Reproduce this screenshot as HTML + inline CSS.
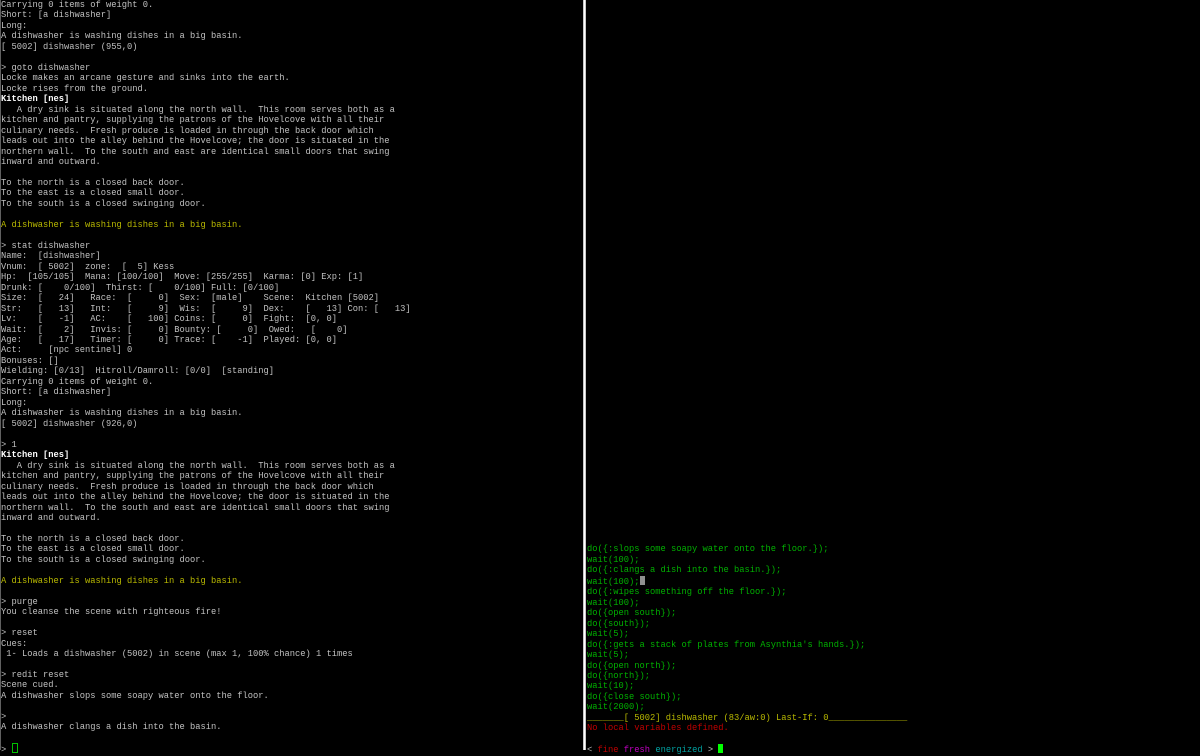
<!DOCTYPE html>
<html><head><meta charset="utf-8"><style>
html,body{margin:0;padding:0;background:#000;width:1200px;height:750px;overflow:hidden}
pre{margin:0;font-family:"Liberation Mono","DejaVu Sans Mono",monospace;font-size:8.75px;line-height:10.47px;color:#c0c0c0;white-space:pre;position:absolute}
#L{left:1px;top:0px}
#R{left:587px;top:544.4px;color:#00b000}
.b{color:#fff;font-weight:bold}
.y{color:#b8b800}
.r{color:#c00000}
.m{color:#c000c0}
.c{color:#00a0a0}
.g{color:#00c000}
.cur{display:inline-block;width:5px;height:9px;background:#00ff00;vertical-align:-1px}
.cur2{display:inline-block;width:4px;height:8px;border:1px solid #00c000;vertical-align:-1px}
.gcur{display:inline-block;width:5px;height:9px;background:#909090;vertical-align:-1px}
#edge{position:absolute;left:0;top:0;width:1px;height:750px;background:#606060}
#div{position:absolute;left:583px;top:0;width:3px;height:750px;background:#c8c8c8}
#div2{position:absolute;left:584px;top:0;width:1px;height:750px;background:#fff}
</style></head><body>
<div id="edge"></div><div id="div"></div><div id="div2"></div>
<pre id="L">Carrying 0 items of weight 0.
Short: [a dishwasher]
Long:
A dishwasher is washing dishes in a big basin.
[ 5002] dishwasher (955,0)

&gt; goto dishwasher
Locke makes an arcane gesture and sinks into the earth.
Locke rises from the ground.
<span class="b">Kitchen [nes]</span>
   A dry sink is situated along the north wall.  This room serves both as a
kitchen and pantry, supplying the patrons of the Hovelcove with all their
culinary needs.  Fresh produce is loaded in through the back door which
leads out into the alley behind the Hovelcove; the door is situated in the
northern wall.  To the south and east are identical small doors that swing
inward and outward.

To the north is a closed back door.
To the east is a closed small door.
To the south is a closed swinging door.

<span class="y">A dishwasher is washing dishes in a big basin.</span>

&gt; stat dishwasher
Name:  [dishwasher]
Vnum:  [ 5002]  zone:  [  5] Kess
Hp:  [105/105]  Mana: [100/100]  Move: [255/255]  Karma: [0] Exp: [1]
Drunk: [    0/100]  Thirst: [    0/100] Full: [0/100]
Size:  [   24]   Race:  [     0]  Sex:  [male]    Scene:  Kitchen [5002]
Str:   [   13]   Int:   [     9]  Wis:  [     9]  Dex:    [   13] Con: [   13]
Lv:    [   -1]   AC:    [   100] Coins: [     0]  Fight:  [0, 0]
Wait:  [    2]   Invis: [     0] Bounty: [     0]  Owed:   [    0]
Age:   [   17]   Timer: [     0] Trace: [    -1]  Played: [0, 0]
Act:     [npc sentinel] 0
Bonuses: []
Wielding: [0/13]  Hitroll/Damroll: [0/0]  [standing]
Carrying 0 items of weight 0.
Short: [a dishwasher]
Long:
A dishwasher is washing dishes in a big basin.
[ 5002] dishwasher (926,0)

&gt; 1
<span class="b">Kitchen [nes]</span>
   A dry sink is situated along the north wall.  This room serves both as a
kitchen and pantry, supplying the patrons of the Hovelcove with all their
culinary needs.  Fresh produce is loaded in through the back door which
leads out into the alley behind the Hovelcove; the door is situated in the
northern wall.  To the south and east are identical small doors that swing
inward and outward.

To the north is a closed back door.
To the east is a closed small door.
To the south is a closed swinging door.

<span class="y">A dishwasher is washing dishes in a big basin.</span>

&gt; purge
You cleanse the scene with righteous fire!

&gt; reset
Cues:
 1- Loads a dishwasher (5002) in scene (max 1, 100% chance) 1 times

&gt; redit reset
Scene cued.
A dishwasher slops some soapy water onto the floor.

&gt;
A dishwasher clangs a dish into the basin.

&gt; <span class="cur2"></span></pre>
<pre id="R">do({:slops some soapy water onto the floor.});
wait(100);
do({:clangs a dish into the basin.});
wait(100);<span class="gcur"></span>
do({:wipes something off the floor.});
wait(100);
do({open south});
do({south});
wait(5);
do({:gets a stack of plates from Asynthia's hands.});
wait(5);
do({open north});
do({north});
wait(10);
do({close south});
wait(2000);
<span class="y">_______[ 5002] dishwasher (83/aw:0) Last-If: 0_______________</span>
<span class="r">No local variables defined.</span>

<span style="color:#c0c0c0">&lt; </span><span class="r">fine</span> <span class="m">fresh</span> <span class="c">energized</span><span style="color:#c0c0c0"> &gt; </span><span class="cur"></span></pre>
</body></html>
